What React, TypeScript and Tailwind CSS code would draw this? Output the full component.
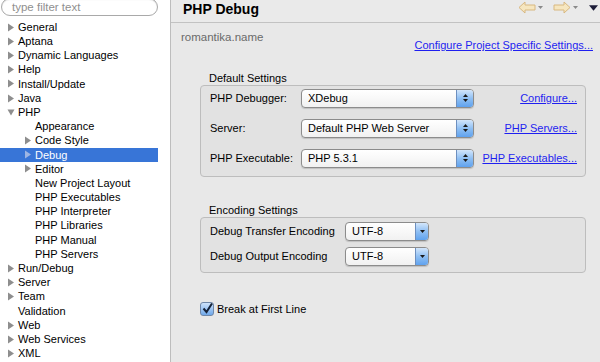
import React from 'react';

type Node = { label: string; level: 0 | 1; arrow?: 'right' | 'down'; selected?: boolean };

const tree: Node[] = [
  { label: 'General', level: 0, arrow: 'right' },
  { label: 'Aptana', level: 0, arrow: 'right' },
  { label: 'Dynamic Languages', level: 0, arrow: 'right' },
  { label: 'Help', level: 0, arrow: 'right' },
  { label: 'Install/Update', level: 0, arrow: 'right' },
  { label: 'Java', level: 0, arrow: 'right' },
  { label: 'PHP', level: 0, arrow: 'down' },
  { label: 'Appearance', level: 1 },
  { label: 'Code Style', level: 1, arrow: 'right' },
  { label: 'Debug', level: 1, arrow: 'right', selected: true },
  { label: 'Editor', level: 1, arrow: 'right' },
  { label: 'New Project Layout', level: 1 },
  { label: 'PHP Executables', level: 1 },
  { label: 'PHP Interpreter', level: 1 },
  { label: 'PHP Libraries', level: 1 },
  { label: 'PHP Manual', level: 1 },
  { label: 'PHP Servers', level: 1 },
  { label: 'Run/Debug', level: 0, arrow: 'right' },
  { label: 'Server', level: 0, arrow: 'right' },
  { label: 'Team', level: 0, arrow: 'right' },
  { label: 'Validation', level: 0 },
  { label: 'Web', level: 0, arrow: 'right' },
  { label: 'Web Services', level: 0, arrow: 'right' },
  { label: 'XML', level: 0, arrow: 'right' },
];

const Arrow = ({ dir, light }: { dir: 'right' | 'down'; light?: boolean }) => (
  <svg width="8" height="9" viewBox="0 0 8 9" className="shrink-0">
    {dir === 'right' ? (
      <path d="M1 0.5 L7 4.5 L1 8.5 Z" fill={light ? '#9db5e3' : '#8e8e8e'} />
    ) : (
      <path d="M0.5 1.5 L7.5 1.5 L4 7.5 Z" fill="#8e8e8e" />
    )}
  </svg>
);

const TreeRow = ({ node }: { node: Node }) => {
  const indent = node.level === 0 ? 'pl-[7px]' : 'pl-[24px]';
  return (
    <div
      className={`flex items-center h-[14.2px] ${indent} ${node.selected ? 'bg-[#3875d7] text-white' : 'text-black'}`}
    >
      <span className="w-[11px] flex items-center">
        {node.arrow && <Arrow dir={node.arrow} light={node.selected} />}
      </span>
      <span className="whitespace-nowrap">{node.label}</span>
    </div>
  );
};

const Combo = ({ value, width, single }: { value: string; width: string; single?: boolean }) => (
  <div
    className={`${width} h-[19px] flex rounded-[4px] border border-[#8c8c8c] bg-gradient-to-b from-white to-[#f1f1f1] shadow-[0_1px_1px_rgba(0,0,0,0.15)] overflow-hidden`}
  >
    <span className="flex-1 pl-[6px] leading-[17px] text-black whitespace-nowrap">{value}</span>
    <span
      className={`${single ? 'w-[13px]' : 'w-[17px]'} flex flex-col items-center justify-center gap-[2px] border-l border-[#6d8fbf] bg-gradient-to-b from-[#d3e6fb] via-[#8fbff3] to-[#5fa2ee]`}
    >
      {!single && (
        <svg width="5" height="3" viewBox="0 0 5 3">
          <path d="M0 3 L2.5 0 L5 3 Z" fill="#1a1a1a" />
        </svg>
      )}
      <svg width="5" height="3" viewBox="0 0 5 3">
        <path d="M0 0 L5 0 L2.5 3 Z" fill="#1a1a1a" />
      </svg>
    </span>
  </div>
);

const Link = ({ children }: { children: React.ReactNode }) => (
  <span className="text-[#1f1ff0] underline underline-offset-[1px] whitespace-nowrap">{children}</span>
);

const NavArrow = ({ dir }: { dir: 'left' | 'right' }) => (
  <svg width="18" height="13" viewBox="0 0 18 13">
    {dir === 'left' ? (
      <path d="M1 6.5 L7 1 L7 4 L17 4 L17 9 L7 9 L7 12 Z" fill="#f6e6bf" stroke="#d8b880" strokeWidth="1" />
    ) : (
      <path d="M17 6.5 L11 1 L11 4 L1 4 L1 9 L11 9 L11 12 Z" fill="#f6e6bf" stroke="#d8b880" strokeWidth="1" />
    )}
  </svg>
);

const TinyDown = ({ color = '#8a8a8a', w = 5 }: { color?: string; w?: number }) => (
  <svg width={w} height={Math.ceil(w * 0.6)} viewBox={`0 0 ${w} ${w * 0.6}`}>
    <path d={`M0 0 L${w} 0 L${w / 2} ${w * 0.6} Z`} fill={color} />
  </svg>
);

export default function App() {
  return (
    <div className="flex w-[600px] h-[362px] overflow-hidden font-['Liberation_Sans',Arial,sans-serif] text-[11px] bg-[#e8e8e8]">
      {/* preference tree */}
      <aside className="w-[171px] shrink-0 bg-white border-r border-[#bdbdbd] flex flex-col">
        <div className="ml-[1px] mt-[-2px] w-[157px] h-[18px] rounded-full border border-[#a9a9a9] flex items-center pl-[10px] pt-[1px] text-[11.5px] text-[#8f8f8f] shadow-[inset_0_1px_1px_rgba(0,0,0,0.12)]">
          type filter text
        </div>
        <div className="mt-[4px] w-[158px]">
          {tree.map((n) => (
            <TreeRow key={n.label} node={n} />
          ))}
        </div>
      </aside>

      {/* page */}
      <main className="flex-1 flex flex-col">
        <header className="h-[23px] flex items-start justify-between pl-[12px] pr-[2px] pt-[1px] bg-[#eaeaea] border-b border-[#c2c2c2]">
          <span className="font-bold text-[14px] leading-[16px] text-black">PHP Debug</span>
          <div className="flex items-center gap-[2px] mt-[0px]">
            <NavArrow dir="left" />
            <TinyDown />
            <span className="w-[6px]" />
            <NavArrow dir="right" />
            <TinyDown />
            <span className="w-[7px]" />
            <TinyDown color="#1c1c38" w={9} />
          </div>
        </header>

        <div className="flex justify-between pl-[10px] pr-[7px] pt-[6px]">
          <span className="text-[#6a6a6a] text-[11.5px]">romantika.name</span>
          <span className="mt-[8px]">
            <Link>Configure Project Specific Settings...</Link>
          </span>
        </div>

        <div className="ml-[29px] mr-[14px] mt-[17px] flex flex-col">
          <span className="pl-[9px] text-black leading-[14px]">Default Settings</span>
          <div className="h-[92px] rounded-[4px] border border-[#bdbdbd] bg-[#e2e2e2] flex flex-col gap-[11px] pt-[3px] pl-[9px] pr-[8px]">
            {[
              ['PHP Debugger:', 'XDebug', 'Configure...'],
              ['Server:', 'Default PHP Web Server', 'PHP Servers...'],
              ['PHP Executable:', 'PHP 5.3.1', 'PHP Executables...'],
            ].map(([label, value, link]) => (
              <div key={label} className="flex items-center h-[19px]">
                <span className="w-[91px] text-black whitespace-nowrap">{label}</span>
                <Combo value={value} width="w-[173px]" />
                <span className="flex-1 flex justify-end">
                  <Link>{link}</Link>
                </span>
              </div>
            ))}
          </div>

          <span className="mt-[26px] pl-[9px] text-black leading-[14px]">Encoding Settings</span>
          <div className="h-[56px] rounded-[4px] border border-[#bdbdbd] bg-[#e2e2e2] flex flex-col gap-[6px] pt-[4px] pl-[9px]">
            {['Debug Transfer Encoding', 'Debug Output Encoding'].map((label) => (
              <div key={label} className="flex items-center h-[19px]">
                <span className="w-[135px] text-black whitespace-nowrap">{label}</span>
                <Combo value="UTF-8" width="w-[84px]" single />
              </div>
            ))}
          </div>

          <label className="mt-[28px] flex items-center gap-[3px] text-black">
            <span className="w-[14px] h-[14px] rounded-[3px] border border-[#6f87a8] bg-gradient-to-b from-[#cfe3fa] to-[#6fa8ea] flex items-center justify-center">
              <svg width="11" height="11" viewBox="0 0 11 11">
                <path d="M1.5 5.5 L4.5 9 L10 0.5" fill="none" stroke="#152238" strokeWidth="2" />
              </svg>
            </span>
            <span>Break at First Line</span>
          </label>
        </div>
      </main>
    </div>
  );
}
